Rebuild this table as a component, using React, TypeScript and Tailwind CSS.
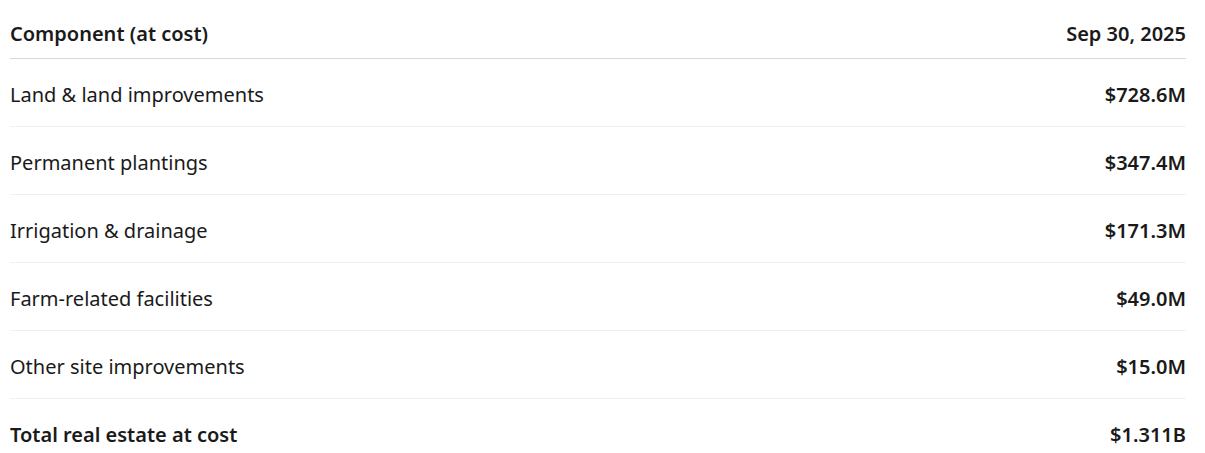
const rows = [
  { label: "Land & land improvements", value: "$728.6M" },
  { label: "Permanent plantings", value: "$347.4M" },
  { label: "Irrigation & drainage", value: "$171.3M" },
  { label: "Farm-related facilities", value: "$49.0M" },
  { label: "Other site improvements", value: "$15.0M" },
];

export default function App() {
  return (
    <div className="min-h-screen bg-white pl-[10px] pr-[19px] font-['Noto_Sans',sans-serif] text-[20px] text-[#1a1a1a]">
      {/* header */}
      <div className="flex h-[59px] items-center justify-between border-b border-[#d9d9d9] pt-[10px] font-semibold">
        <span>Component (at cost)</span>
        <span>Sep 30, 2025</span>
      </div>

      {rows.map((row) => (
        <div
          key={row.label}
          className="flex h-[68px] items-center justify-between border-b border-[#f0f0f0] pt-[4px]"
        >
          <span>{row.label}</span>
          <span className="font-semibold">{row.value}</span>
        </div>
      ))}

      {/* total */}
      <div className="flex h-[68px] items-center justify-between pt-[4px] font-semibold">
        <span>Total real estate at cost</span>
        <span>$1.311B</span>
      </div>
    </div>
  );
}
